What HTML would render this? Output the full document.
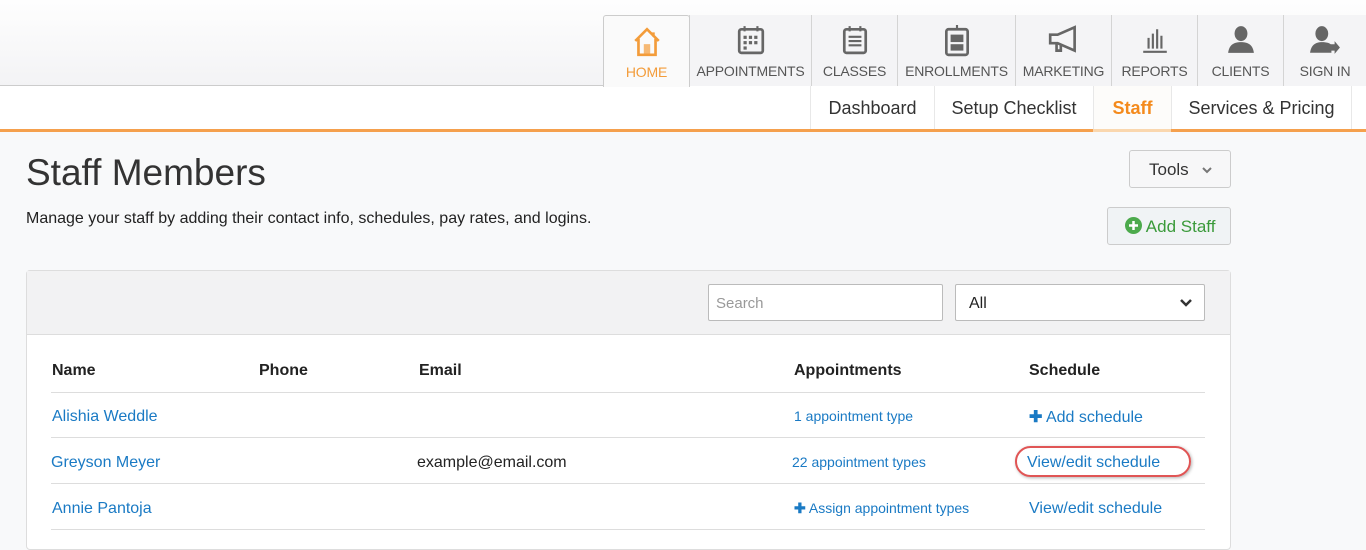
<!DOCTYPE html>
<html><head><style>
*{box-sizing:border-box;margin:0;padding:0}
body{width:1366px;height:535px;overflow:hidden;background:#f8f9fa;font-family:"Liberation Sans",sans-serif;position:relative;color:#222}
.top{position:absolute;left:0;top:0;width:1366px;height:86px;background:linear-gradient(#fefefe,#f3f3f5);border-bottom:1px solid #ccc}
.tab{position:absolute;top:15px;height:71px;background:#f4f4f6;border-left:1px solid #d4d4d4;text-align:center;font-size:14px;color:#555;letter-spacing:-0.2px}
.tab .ic{position:absolute;left:50%;top:10px;transform:translateX(-50%)}
.tab span{position:absolute;left:0;right:0;top:48px}
.tab.home{background:#fafafa;border:1px solid #ccc;border-bottom:none;border-radius:3px 3px 0 0;height:72px;color:#f39c3a;z-index:2}
.sub{position:absolute;left:0;top:86px;width:1366px;height:44px;background:#fff}
.orange{position:absolute;left:0;top:129px;width:1366px;height:3px;background:#f5a04d}
.st{position:absolute;top:86px;height:43px;border-left:1px solid #e8e8e8;font-size:18px;color:#333;line-height:44px;text-align:center}
h1{position:absolute;left:26px;top:152px;font-size:37px;font-weight:normal;color:#333}
.desc{position:absolute;left:26px;top:210px;font-size:16px;color:#222}
.btn{position:absolute;border:1px solid #ccc;border-radius:3px;background:#f7f7f8;font-size:17px}
.panel{position:absolute;left:26px;top:270px;width:1205px;height:280px;border:1px solid #ddd;border-radius:4px;background:#fff}
.ph{height:64px;background:#f2f2f3;border-bottom:1px solid #ddd}
.inp{position:absolute;height:37px;border:1px solid #bbb;border-radius:2px;background:#fff;font-size:15px;line-height:37px;padding-left:7px}
.t{position:absolute;font-size:16px}
.hd{font-weight:bold;top:362px;color:#222}
.ln{position:absolute;left:51px;width:1154px;height:1px;background:#ddd}
a,.lk{color:#1a7ac4}
.sm{font-size:14px}
</style></head><body>
<div class="top"></div>
<div class="tab home" style="left:603px;width:87px"><svg class="ic" width="30" height="32" viewBox="0 0 28 30"><path d="M3 14 L14 3 L25 14 M6 12 V27 H22 V12 M20 6 V10" fill="none" stroke="#f39c3a" stroke-width="2.5"/><rect x="11" y="17" width="6" height="10" fill="#f39c3a" opacity=".7"/></svg><span>HOME</span></div>
<div class="tab" style="left:689px;width:122px"><svg class="ic" width="28" height="30" viewBox="0 0 26 28"><rect x="2" y="4" width="22" height="22" rx="2" fill="none" stroke="#666" stroke-width="2.5"/><path d="M7 1V6M19 1V6" stroke="#666" stroke-width="2"/><g fill="#666"><rect x="6" y="10" width="3" height="3"/><rect x="11" y="10" width="3" height="3"/><rect x="16" y="10" width="3" height="3"/><rect x="6" y="15" width="3" height="3"/><rect x="11" y="15" width="3" height="3"/><rect x="16" y="15" width="3" height="3"/><rect x="6" y="20" width="3" height="3"/></g></svg><span>APPOINTMENTS</span></div>
<div class="tab" style="left:811px;width:86px"><svg class="ic" width="28" height="30" viewBox="0 0 26 28"><rect x="3" y="4" width="20" height="22" rx="2" fill="none" stroke="#666" stroke-width="2.5"/><path d="M8 1V6M18 1V6M7 11H19M7 15H19M7 19H19" stroke="#666" stroke-width="2"/></svg><span>CLASSES</span></div>
<div class="tab" style="left:897px;width:118px"><svg class="ic" width="28" height="32" viewBox="0 0 26 30"><rect x="3" y="4" width="20" height="24" rx="2" fill="none" stroke="#666" stroke-width="2.5"/><path d="M13 0V5" stroke="#666" stroke-width="2"/><rect x="7" y="9" width="12" height="7" fill="#666"/><rect x="7" y="18" width="12" height="6" fill="#666"/></svg><span>ENROLLMENTS</span></div>
<div class="tab" style="left:1015px;width:96px"><svg class="ic" width="34" height="30" viewBox="0 0 32 28"><path d="M3 9H10L26 2V24L10 17H3Z" fill="none" stroke="#666" stroke-width="2.5"/><path d="M9 17V24H13V18" fill="none" stroke="#666" stroke-width="2.5"/></svg><span>MARKETING</span></div>
<div class="tab" style="left:1111px;width:86px"><svg class="ic" width="30" height="30" viewBox="0 0 28 28"><path d="M8 22V12M12 22V8M16 22V4M20 22V10M3 25H25" stroke="#666" stroke-width="2"/></svg><span>REPORTS</span></div>
<div class="tab" style="left:1197px;width:86px"><svg class="ic" width="30" height="30" viewBox="0 0 28 28"><ellipse cx="14" cy="8" rx="6" ry="7" fill="#666"/><path d="M2 26C3 18 8 16 14 16S25 18 26 26Z" fill="#666"/></svg><span>CLIENTS</span></div>
<div class="tab" style="left:1283px;width:83px"><svg class="ic" width="32" height="30" viewBox="0 0 30 28"><ellipse cx="12" cy="8" rx="6" ry="7" fill="#666"/><path d="M1 26C2 18 7 16 12 16S20 17 21 19V26Z" fill="#666"/><path d="M18 18H24V15L29 21L24 27V24H18Z" fill="#666"/></svg><span>SIGN IN</span></div>
<div class="sub"></div>
<div class="st" style="left:810px;width:124px">Dashboard</div>
<div class="st" style="left:934px;width:159px">Setup Checklist</div>
<div class="st" style="left:1093px;width:78px;color:#f48a1c;font-weight:bold;background:#fdfcfa">Staff</div>
<div class="st" style="left:1171px;width:181px;border-right:1px solid #e8e8e8">Services &amp; Pricing</div>
<div class="orange"></div>
<div style="position:absolute;left:1093px;top:129px;width:78px;height:3px;background:#fad7ae"></div>
<h1>Staff Members</h1>
<div class="desc">Manage your staff by adding their contact info, schedules, pay rates, and logins.</div>
<div class="btn" style="left:1129px;top:150px;width:102px;height:38px;line-height:37px;padding-left:19px;color:#333">Tools <svg width="12" height="8" viewBox="0 0 12 8" style="margin-left:8px;vertical-align:1px"><path d="M2 2L6 6L10 2" fill="none" stroke="#777" stroke-width="2"/></svg></div>
<div class="btn" style="left:1107px;top:207px;width:124px;height:38px;line-height:37px;padding-left:17px;color:#3a9a3a;background:#f0f3f5"><svg width="17" height="17" viewBox="0 0 17 17" style="vertical-align:-2px"><circle cx="8.5" cy="8.5" r="8.5" fill="#4caa4c"/><path d="M8.5 4V13M4 8.5H13" stroke="#fff" stroke-width="2.5"/></svg> Add Staff</div>
<div class="panel"><div class="ph"></div></div>
<div class="inp" style="left:708px;top:284px;width:235px;color:#999">Search</div>
<div class="inp" style="left:955px;top:284px;width:250px;color:#222;font-size:16px;padding-left:13px">All<svg width="14" height="10" viewBox="0 0 14 10" style="position:absolute;right:11px;top:13px"><path d="M2 2L7 7L12 2" fill="none" stroke="#333" stroke-width="2.5"/></svg></div>
<div class="t hd" style="left:52px">Name</div>
<div class="t hd" style="left:259px">Phone</div>
<div class="t hd" style="left:419px">Email</div>
<div class="t hd" style="left:794px">Appointments</div>
<div class="t hd" style="left:1029px">Schedule</div>
<div class="ln" style="top:392px"></div>
<div class="ln" style="top:437px"></div>
<div class="ln" style="top:483px"></div>
<div class="ln" style="top:529px"></div>
<div class="t lk" style="left:52px;top:408px">Alishia Weddle</div>
<div class="t lk sm" style="left:794px;top:408px">1 appointment type</div>
<div class="t lk" style="left:1029px;top:407px"><b>&#10010;</b> Add schedule</div>
<div class="t lk" style="left:51px;top:454px">Greyson Meyer</div>
<div class="t" style="left:417px;top:454px">example@email.com</div>
<div class="t lk sm" style="left:792px;top:454px">22 appointment types</div>
<div class="t lk" style="left:1027px;top:454px">View/edit schedule</div>
<div style="position:absolute;left:1015px;top:446px;width:176px;height:31px;border:2px solid #e05555;border-radius:16px;box-shadow:1px 1px 3px rgba(0,0,0,.3)"></div>
<div class="t lk" style="left:52px;top:500px">Annie Pantoja</div>
<div class="t lk sm" style="left:794px;top:500px"><b>&#10010;</b> Assign appointment types</div>
<div class="t lk" style="left:1029px;top:500px">View/edit schedule</div>
</body></html>
